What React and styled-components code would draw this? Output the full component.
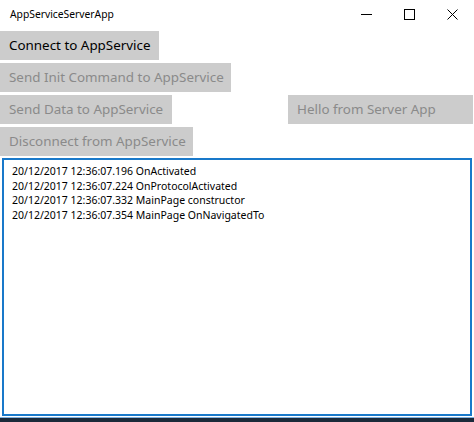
import React from 'react';
import styled, { createGlobalStyle } from 'styled-components';

const GlobalStyle = createGlobalStyle`
  html, body {
    margin: 0;
    padding: 0;
    background: #ffffff;
  }
  body {
    font-family: 'Noto Sans', 'Open Sans', sans-serif;
  }
`;

const logLines = [
  '20/12/2017 12:36:07.196 OnActivated',
  '20/12/2017 12:36:07.224 OnProtocolActivated',
  '20/12/2017 12:36:07.332 MainPage constructor',
  '20/12/2017 12:36:07.354 MainPage OnNavigatedTo',
];

function App() {
  return (
    <>
      <GlobalStyle />
      <Window>
        <TitleBar>
          <Title>AppServiceServerApp</Title>
          <Controls>
            <ControlButton aria-label="Minimize">
              <svg width="11" height="11" viewBox="0 0 11 11">
                <line x1="0" y1="5.5" x2="11" y2="5.5" stroke="#000" strokeWidth="1" />
              </svg>
            </ControlButton>
            <ControlButton aria-label="Maximize">
              <svg width="11" height="11" viewBox="0 0 11 11">
                <rect x="0.5" y="0.5" width="10" height="10" fill="none" stroke="#000" strokeWidth="1" />
              </svg>
            </ControlButton>
            <ControlButton aria-label="Close">
              <svg width="11" height="11" viewBox="0 0 11 11">
                <path d="M0.5 0.5 L10.5 10.5 M10.5 0.5 L0.5 10.5" stroke="#000" strokeWidth="1" />
              </svg>
            </ControlButton>
          </Controls>
        </TitleBar>

        <Content>
          <ButtonStack>
            <Row>
              <ActionButton $width={159}>Connect to AppService</ActionButton>
            </Row>
            <Row>
              <ActionButton $width={231} disabled>Send Init Command to AppService</ActionButton>
            </Row>
            <Row>
              <ActionButton $width={172} disabled>Send Data to AppService</ActionButton>
              <ActionButton $width={185} disabled>Hello from Server App</ActionButton>
            </Row>
            <Row>
              <ActionButton $width={193} disabled>Disconnect from AppService</ActionButton>
            </Row>
          </ButtonStack>

          <LogBox>
            {logLines.map((line) => (
              <LogLine key={line}>{line}</LogLine>
            ))}
          </LogBox>
        </Content>

        <Taskbar />
      </Window>
    </>
  );
}

export default App;

const Window = styled.div`
  width: 474px;
  height: 422px;
  display: flex;
  flex-direction: column;
  background: #ffffff;
  overflow: hidden;
`;

const TitleBar = styled.div`
  height: 30px;
  display: flex;
  align-items: center;
  justify-content: space-between;
  padding-left: 10px;
  box-sizing: border-box;
`;

const Title = styled.div`
  font-size: 10.3px;
  color: #000;
  margin-top: -2px;
`;

const Controls = styled.div`
  display: flex;
  align-self: flex-start;
`;

const ControlButton = styled.div`
  width: 43px;
  height: 29px;
  display: flex;
  align-items: center;
  justify-content: center;
`;

const Content = styled.div`
  flex: 1;
  display: flex;
  flex-direction: column;
  padding-top: 1px;
`;

const ButtonStack = styled.div`
  display: flex;
  flex-direction: column;
  gap: 3px;
`;

const Row = styled.div`
  display: flex;
  justify-content: space-between;
  padding-right: 1px;
`;

const ActionButton = styled.button`
  width: ${(p) => p.$width}px;
  height: 29px;
  margin: 0;
  padding: 0 0 1px 9px;
  border: none;
  background: #cccccc;
  color: ${(p) => (p.disabled ? '#8a8a8a' : '#000000')};
  font-family: 'Noto Sans', 'Open Sans', sans-serif;
  font-size: 13.4px;
  text-align: left;
  white-space: nowrap;
  cursor: default;
`;

const LogBox = styled.div`
  margin: 2px 2px 0 2px;
  height: 258px;
  box-sizing: border-box;
  border: 2px solid #1979ca;
  padding: 4px 8px;
`;

const LogLine = styled.div`
  font-size: 10.5px;
  line-height: 14.7px;
  color: #000;
  white-space: nowrap;
`;

const Taskbar = styled.div`
  height: 4px;
  margin-top: auto;
  background: #1b2a3a;
  border-top: 1px solid #7fb2e0;
`;
